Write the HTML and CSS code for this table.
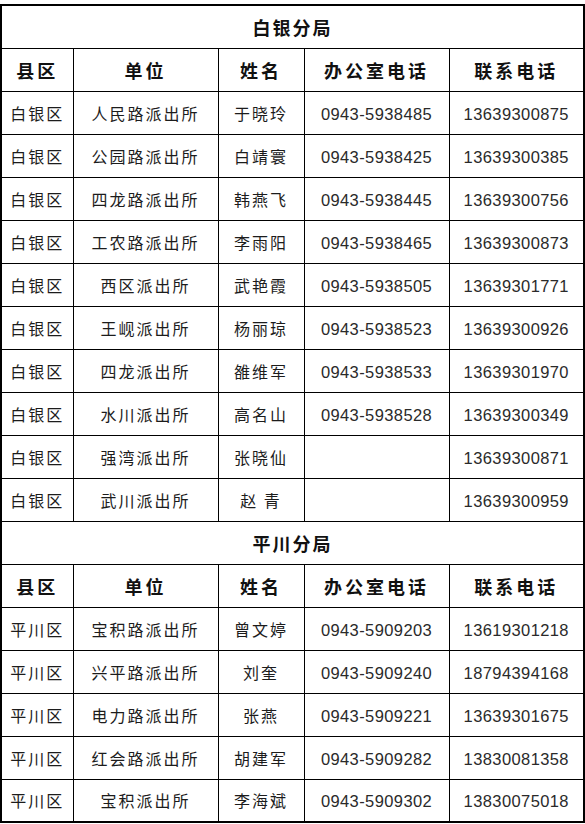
FILE: index.html
```html
<!DOCTYPE html>
<html lang="zh-CN">
<head>
<meta charset="utf-8">
<title>白银分局 平川分局</title>
<link rel="stylesheet" href="styles.css">
</head>
<body>
<table class="roster">
  <colgroup>
    <col class="c-county"><col class="c-unit"><col class="c-name"><col class="c-office"><col class="c-mobile">
  </colgroup>
  <tbody>
    <tr class="title"><td colspan="5">白银分局</td></tr>
    <tr class="head"><td>县区</td><td>单位</td><td>姓名</td><td>办公室电话</td><td>联系电话</td></tr>
    <tr><td>白银区</td><td>人民路派出所</td><td>于晓玲</td><td class="num">0943-5938485</td><td class="num">13639300875</td></tr>
    <tr><td>白银区</td><td>公园路派出所</td><td>白靖寰</td><td class="num">0943-5938425</td><td class="num">13639300385</td></tr>
    <tr><td>白银区</td><td>四龙路派出所</td><td>韩燕飞</td><td class="num">0943-5938445</td><td class="num">13639300756</td></tr>
    <tr><td>白银区</td><td>工农路派出所</td><td>李雨阳</td><td class="num">0943-5938465</td><td class="num">13639300873</td></tr>
    <tr><td>白银区</td><td>西区派出所</td><td>武艳霞</td><td class="num">0943-5938505</td><td class="num">13639301771</td></tr>
    <tr><td>白银区</td><td>王岘派出所</td><td>杨丽琼</td><td class="num">0943-5938523</td><td class="num">13639300926</td></tr>
    <tr><td>白银区</td><td>四龙派出所</td><td>雒维军</td><td class="num">0943-5938533</td><td class="num">13639301970</td></tr>
    <tr><td>白银区</td><td>水川派出所</td><td>高名山</td><td class="num">0943-5938528</td><td class="num">13639300349</td></tr>
    <tr><td>白银区</td><td>强湾派出所</td><td>张晓仙</td><td class="num"></td><td class="num">13639300871</td></tr>
    <tr><td>白银区</td><td>武川派出所</td><td>赵&nbsp;青</td><td class="num"></td><td class="num">13639300959</td></tr>
    <tr class="title"><td colspan="5">平川分局</td></tr>
    <tr class="head"><td>县区</td><td>单位</td><td>姓名</td><td>办公室电话</td><td>联系电话</td></tr>
    <tr><td>平川区</td><td>宝积路派出所</td><td>曾文婷</td><td class="num">0943-5909203</td><td class="num">13619301218</td></tr>
    <tr><td>平川区</td><td>兴平路派出所</td><td>刘奎</td><td class="num">0943-5909240</td><td class="num">18794394168</td></tr>
    <tr><td>平川区</td><td>电力路派出所</td><td>张燕</td><td class="num">0943-5909221</td><td class="num">13639301675</td></tr>
    <tr><td>平川区</td><td>红会路派出所</td><td>胡建军</td><td class="num">0943-5909282</td><td class="num">13830081358</td></tr>
    <tr><td>平川区</td><td>宝积派出所</td><td>李海斌</td><td class="num">0943-5909302</td><td class="num">13830075018</td></tr>
  </tbody>
</table>
</body>
</html>
```

FILE: styles.css
```css
html, body {
  margin: 0;
  padding: 0;
  background: #ffffff;
}

body {
  padding: 4px 0 0 0;
  font-family: "Noto Sans CJK SC", "Noto Sans", sans-serif;
  color: #1c1c1c;
}

.roster {
  width: 583px;
  border-collapse: collapse;
  table-layout: fixed;
  border: 2px solid #000;
}

.c-county { width: 72px; }
.c-unit { width: 145px; }
.c-name { width: 86px; }
.c-office { width: 145px; }
.c-mobile { width: 135px; }

.roster tr {
  height: 43px;
}

.roster td {
  border: 1px solid #000;
  padding: 0;
  text-align: center;
  vertical-align: middle;
  font-size: 16px;
  letter-spacing: 2px;
  line-height: 20px;
  white-space: nowrap;
}

.roster td.num {
  font-family: "Liberation Sans", Arial, sans-serif;
  font-size: 16.5px;
  letter-spacing: 0.4px;
  padding-top: 2px;
  color: #2a2a2a;
}

.roster .title td {
  font-size: 18px;
  font-weight: 700;
  letter-spacing: 2px;
  color: #111;
}

.roster .head td {
  font-size: 18px;
  font-weight: 700;
  letter-spacing: 3px;
  color: #111;
}
```
